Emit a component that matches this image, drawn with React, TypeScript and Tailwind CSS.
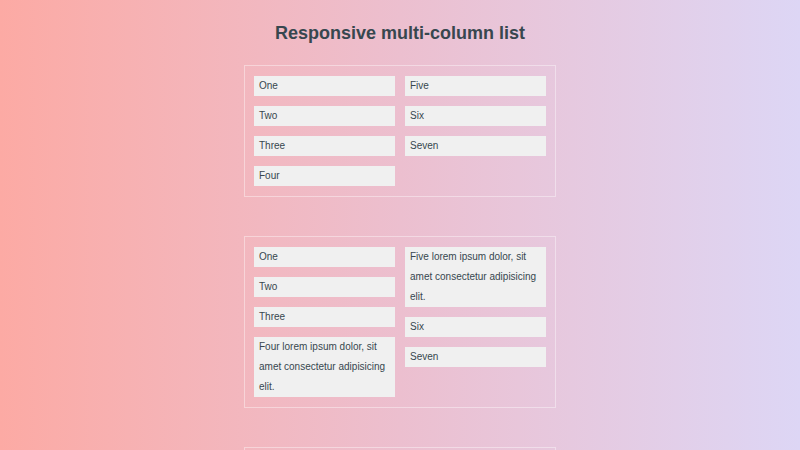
import React from 'react';

const lorem = 'lorem ipsum dolor, sit amet consectetur adipisicing elit.';

const lists: string[][][] = [
  [
    ['One', 'Two', 'Three', 'Four'],
    ['Five', 'Six', 'Seven'],
  ],
  [
    ['One', 'Two', 'Three', `Four ${lorem}`],
    [`Five ${lorem}`, 'Six', 'Seven'],
  ],
  [
    ['One', 'Two', 'Three', 'Four'],
    ['Five', 'Six', 'Seven'],
  ],
];

const Item: React.FC<{ text: string }> = ({ text }) => (
  <li className="bg-[#f0f0f0] px-[5px] text-[10px] leading-[20px] text-[#37474f]">{text}</li>
);

const App: React.FC = () => {
  return (
    <div
      className="min-h-screen bg-gradient-to-r from-[#fcaaa4] via-[#ecbfcf] to-[#ddd6f5] pt-[22px] pb-10"
      style={{ fontFamily: '"Liberation Sans", Arial, sans-serif' }}
    >
      <h1 className="text-center text-[18px] font-bold leading-[22px] text-[#37474f]">
        Responsive multi-column list
      </h1>
      <div className="mt-[21px] flex flex-col items-center gap-[39px]">
        {lists.map((cols, i) => (
          <div key={i} className="flex w-[312px] gap-[10px] border border-white/40 px-[9px] py-[10px]">
            {cols.map((col, j) => (
              <ul key={j} className="flex flex-1 flex-col gap-[10px]">
                {col.map((t) => (
                  <Item key={t} text={t} />
                ))}
              </ul>
            ))}
          </div>
        ))}
      </div>
    </div>
  );
};

export default App;
